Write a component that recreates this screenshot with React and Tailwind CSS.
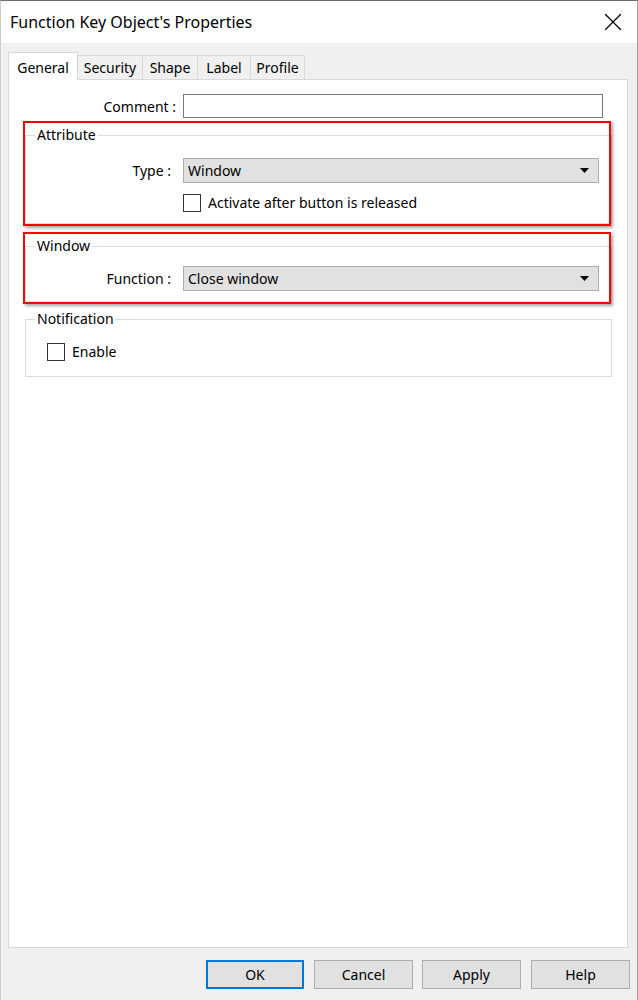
import { X } from "lucide-react";

const font = { fontFamily: '"Noto Sans", "Segoe UI", Arial, sans-serif' };

function Select({ value }) {
  return (
    <div className="flex h-[25px] w-[416px] items-center justify-between border border-[#adadad] bg-[#e1e1e1] pl-[4px] pr-[9px]">
      <span>{value}</span>
      <svg width="9" height="5" viewBox="0 0 9 5">
        <path d="M0 0 H9 L4.5 5 Z" fill="#000" />
      </svg>
    </div>
  );
}

function Check({ label }) {
  return (
    <div className="flex items-center gap-[7px]">
      <div className="h-[18px] w-[18px] border border-[#333] bg-white" />
      <span>{label}</span>
    </div>
  );
}

function Group({ title, marked, children, className }) {
  return (
    <div className={"relative " + (className || "")}>
      <fieldset className="border border-[#dcdcdc]">
        <legend className="ml-[9px] px-[2px] leading-[20px]">{title}</legend>
        {children}
      </fieldset>
      {marked && (
        <div className="pointer-events-none absolute -top-[4px] -bottom-[2px] -left-[2px] right-[1px] border-2 border-[#ff0000] shadow-[2px_2px_3px_rgba(0,0,0,0.35)]" />
      )}
    </div>
  );
}

const tabs = [
  ["General", "w-[70px]"],
  ["Security", "w-[66px]"],
  ["Shape", "w-[56px]"],
  ["Label", "w-[54px]"],
  ["Profile", "w-[55px]"],
];

export default function App() {
  return (
    <div
      className="flex h-[1000px] w-[638px] flex-col border-t border-l border-r border-t-[#6b6b6b] border-l-[#cfcdc4] border-r-[#a0a0a0] bg-[#f0f0f0] text-[14px] text-black"
      style={font}
    >
      <div className="flex h-[42px] items-center justify-between bg-white pl-[9px] pr-[9px]">
        <span className="text-[16px]">Function Key Object's Properties</span>
        <X size={30} strokeWidth={1} />
      </div>

      <div className="px-[7px] pt-[9px]">
        <div className="flex h-[27px] items-end">
          {tabs.map(([t, w], i) =>
            i === 0 ? (
              <div
                key={t}
                className={"relative z-10 -mb-px flex h-[28px] items-start justify-center border border-b-0 border-[#d9d9d9] bg-white pt-[4px] " + w}
              >
                {t}
              </div>
            ) : (
              <div
                key={t}
                className={"-ml-px flex h-[24px] items-center justify-center border border-b-0 border-[#d9d9d9] bg-[#f0f0f0] " + w}
              >
                {t}
              </div>
            )
          )}
        </div>

        <div className="h-[869px] w-[620px] border border-[#d9d9d9] bg-white pt-[14px]">
          <div className="flex items-center">
            <span className="w-[174px] pr-[7px] text-right">Comment :</span>
            <div className="h-[24px] w-[420px] border border-[#7a7a7a] bg-white" />
          </div>

          <div className="ml-[16px] mt-[7px] w-[587px]">
            <Group title="Attribute" marked>
              <div className="flex flex-col gap-[9px] pt-[13px] pb-[10px]">
                <div className="flex items-center">
                  <span className="w-[157px] pr-[12px] text-right">Type :</span>
                  <Select value="Window" />
                </div>
                <div className="pl-[157px]">
                  <Check label="Activate after button is released" />
                </div>
              </div>
            </Group>

            <Group title="Window" marked className="mt-[12px]">
              <div className="flex items-center pt-[10px] pb-[10px]">
                <span className="w-[157px] pr-[12px] text-right">Function :</span>
                <Select value="Close window" />
              </div>
            </Group>

            <Group title="Notification" className="mt-[7px]">
              <div className="pl-[21px] pt-[12px] pb-[14px]">
                <Check label="Enable" />
              </div>
            </Group>
          </div>
        </div>
      </div>

      <div className="mt-[12px] flex justify-end pr-[7px]">
        <button className="h-[29px] w-[98px] border-2 border-[#0078d7] bg-[#e1e1e1]">OK</button>
        <button className="ml-[10px] h-[29px] w-[99px] border border-[#adadad] bg-[#e1e1e1]">Cancel</button>
        <button className="ml-[9px] h-[29px] w-[99px] border border-[#adadad] bg-[#e1e1e1]">Apply</button>
        <button className="ml-[10px] h-[29px] w-[99px] border border-[#adadad] bg-[#e1e1e1]">Help</button>
      </div>
    </div>
  );
}
